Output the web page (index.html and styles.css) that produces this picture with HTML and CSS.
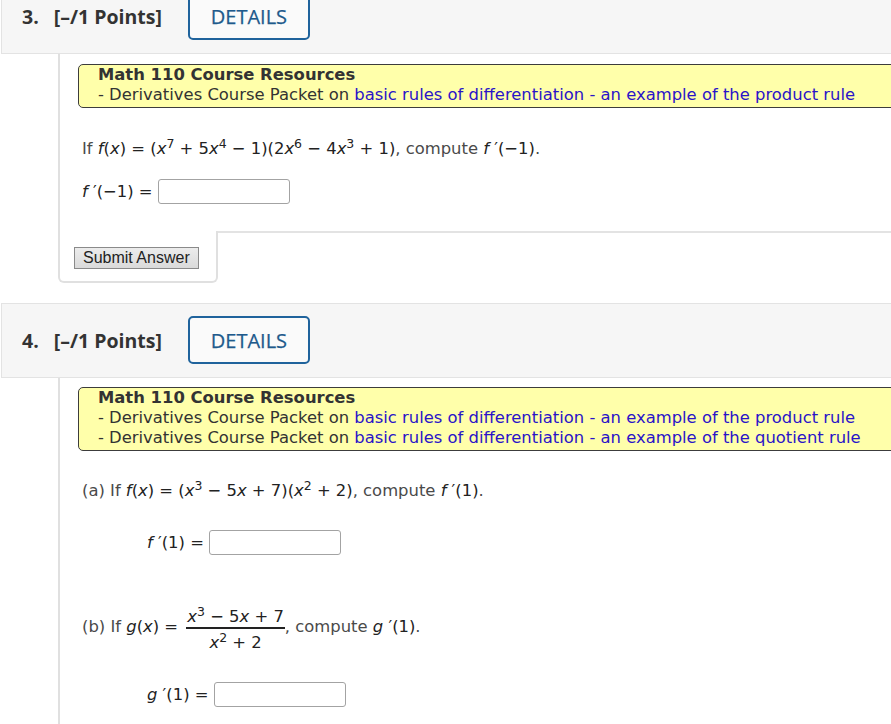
FILE: index.html
```html
<!DOCTYPE html>
<html>
<head>
<meta charset="utf-8">
<title>Questions</title>
<link rel="stylesheet" href="styles.css">
</head>
<body>
<div class="page">

  <section class="question">
    <div class="q-header">
      <span class="q-num">3.</span>
      <span class="q-points">[–/1 Points]</span>
      <button class="details">DETAILS</button>
    </div>
    <div class="q-body">
      <div class="q-content">
        <div class="resources">
          <div class="res-title">Math 110 Course Resources</div>
          <div class="res-line">- Derivatives Course Packet on <a class="res-link">basic rules of differentiation - an example of the product rule</a></div>
        </div>
        <p class="prompt">If <span class="m"><i>f</i>(<i>x</i>) = (<i>x</i><sup>7</sup> + 5<i>x</i><sup>4</sup> − 1)(2<i>x</i><sup>6</sup> − 4<i>x</i><sup>3</sup> + 1)</span>, compute <span class="m"><i>f</i> ′(−1)</span>.</p>
        <div class="answer">
          <span class="m"><i>f</i> ′(−1) =</span>
          <input class="ans" type="text">
        </div>
      </div>
      <div class="q-footer">
        <div class="submit-tab"><button class="submit">Submit Answer</button></div>
        <div class="footer-rest"></div>
      </div>
    </div>
  </section>

  <section class="question">
    <div class="q-header">
      <span class="q-num">4.</span>
      <span class="q-points">[–/1 Points]</span>
      <button class="details">DETAILS</button>
    </div>
    <div class="q-body">
      <div class="q-content q-content-2">
        <div class="resources">
          <div class="res-title">Math 110 Course Resources</div>
          <div class="res-line">- Derivatives Course Packet on <a class="res-link">basic rules of differentiation - an example of the product rule</a></div>
          <div class="res-line">- Derivatives Course Packet on <a class="res-link">basic rules of differentiation - an example of the quotient rule</a></div>
        </div>
        <p class="prompt prompt-2">(a) If <span class="m"><i>f</i>(<i>x</i>) = (<i>x</i><sup>3</sup> − 5<i>x</i> + 7)(<i>x</i><sup>2</sup> + 2)</span>, compute <span class="m"><i>f</i> ′(1)</span>.</p>
        <div class="answer answer-indent answer-a">
          <span class="m"><i>f</i> ′(1) =</span>
          <input class="ans" type="text">
        </div>
        <p class="prompt prompt-b">(b) If <span class="m"><i>g</i>(<i>x</i>) =</span> <span class="frac m"><span class="num"><i>x</i><sup>3</sup> − 5<i>x</i> + 7</span><span class="den"><i>x</i><sup>2</sup> + 2</span></span>, compute <span class="m"><i>g</i> ′(1)</span>.</p>
        <div class="answer answer-indent answer-b">
          <span class="m"><i>g</i> ′(1) =</span>
          <input class="ans" type="text">
        </div>
      </div>
    </div>
  </section>

</div>
</body>
</html>
```
FILE: styles.css
```css
html, body {
  margin: 0;
  padding: 0;
  overflow: hidden;
  background: #ffffff;
}

.page {
  width: 1000px;
  margin-top: -21px;
}

.question + .question {
  margin-top: 20px;
}

/* header bar */
.q-header {
  margin-left: 1px;
  display: flex;
  align-items: center;
  height: 48px;
  padding: 12px 0 13px 20px;
  background: #f6f6f6;
  border: 1px solid #e3e3e3;
  border-right: none;
  font-family: "Open Sans", "Liberation Sans", sans-serif;
  color: #333333;
}

.q-num,
.q-points {
  font-weight: 700;
  font-size: 19.5px;
}

.q-points {
  margin-left: 15px;
}

.details {
  margin-left: 26px;
  width: 122px;
  height: 48px;
  box-sizing: border-box;
  border: 2px solid #1f639c;
  border-radius: 5px;
  background: #fafafa;
  color: #1e5a8c;
  font-family: "Open Sans", "Liberation Sans", sans-serif;
  font-size: 20px;
  padding: 0;
  -webkit-text-stroke: 0.25px #1e5a8c;
}

/* body */
.q-body {
  margin-left: 58px;
  font-family: "DejaVu Sans", Verdana, sans-serif;
  font-size: 16.4px;
  line-height: 20px;
  color: #4a4a4a;
}

.q-content {
  border-left: 2px solid #e0e0e0;
  padding: 10px 0 27px 18px;
}

.q-content-2 {
  padding-top: 9px;
  padding-bottom: 40px;
}

.resources {
  background: #ffffaa;
  border: 1px solid #3c3c3c;
  border-radius: 5px;
  padding: 0 0 2px 19px;
  color: #333333;
}

.res-title {
  font-weight: 700;
}

.res-link {
  color: #2a14c8;
  text-decoration: none;
}

.prompt {
  margin: 31px 0 0 4px;
}

.prompt-2 {
  margin-top: 30px;
}

.m {
  color: #222222;
}

.m i {
  font-style: italic;
}

sup {
  font-size: 12.5px;
  line-height: 0;
  vertical-align: 6px;
}

.answer {
  display: flex;
  align-items: center;
  gap: 5px;
  margin: 20px 0 0 4px;
  height: 25px;
}

.answer-indent {
  margin-left: 69px;
}

.answer-a {
  margin-top: 29px;
}

.answer-b {
  margin-top: 29px;
}

.ans {
  width: 132px;
  height: 25px;
  box-sizing: border-box;
  border: 1px solid #a3a3a3;
  border-radius: 3px;
  padding: 0;
  margin: 0;
  background: #ffffff;
}

.prompt-b {
  margin-top: 52px;
}

.frac {
  display: inline-flex;
  flex-direction: column;
  align-items: center;
  vertical-align: 10px;
  margin-left: 3px;
}

.num {
  border-bottom: 2px solid #222222;
  padding: 0 1px;
  line-height: 20px;
}

.den {
  padding-top: 4px;
  line-height: 20px;
}

/* footer with submit tab */
.q-footer {
  display: flex;
}

.submit-tab {
  width: 142px;
  padding: 16px 0 12px 14px;
  border-left: 2px solid #e0e0e0;
  border-right: 2px solid #e0e0e0;
  border-bottom: 2px solid #e0e0e0;
  border-radius: 0 0 6px 6px;
}

.footer-rest {
  flex: 1;
  border-top: 2px solid #e3e3e3;
}

.submit {
  display: block;
  height: 22px;
  padding: 0 8px;
  margin: 0;
  font-family: "Liberation Sans", Arial, sans-serif;
  font-size: 16px;
  line-height: 20px;
  color: #222222;
  background: linear-gradient(#ececec, #dadada);
  border: 1px solid #8a8a8a;
  border-radius: 0;
}
```
